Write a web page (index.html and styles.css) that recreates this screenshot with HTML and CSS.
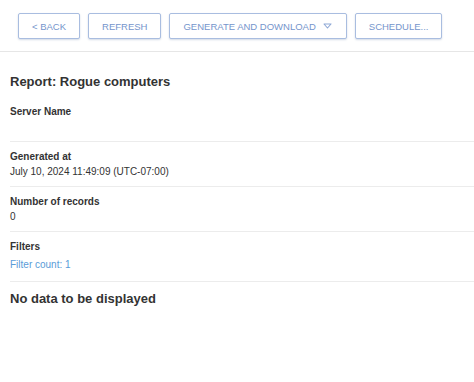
FILE: index.html
```html
<!DOCTYPE html>
<html lang="en">
<head>
    <meta charset="UTF-8">
    <meta name="viewport" content="width=device-width, initial-scale=1.0">
    <title>Report: Rogue computers</title>
    <link rel="stylesheet" href="styles.css">
</head>
<body>
    <div class="toolbar">
        <button class="btn">&lt; Back</button>
        <button class="btn">Refresh</button>
        <button class="btn dropdown">
            Generate and download
            <svg class="caret" width="9" height="6" viewBox="0 0 9 6">
                <path d="M1 1 L4.5 5 L8 1 Z" fill="none" stroke="#8fa9d6" stroke-width="1.1" stroke-linejoin="round"/>
            </svg>
        </button>
        <button class="btn">Schedule...</button>
    </div>

    <div class="report">
        <h1 class="title">Report: Rogue computers</h1>

        <div class="field">
            <div class="label">Server Name</div>
            <div class="value"></div>
        </div>
        <div class="field">
            <div class="label">Generated at</div>
            <div class="value">July 10, 2024 11:49:09 (UTC-07:00)</div>
        </div>
        <div class="field">
            <div class="label">Number of records</div>
            <div class="value">0</div>
        </div>
        <div class="field">
            <div class="label">Filters</div>
            <div class="value link">Filter count: 1</div>
        </div>

        <h2 class="empty">No data to be displayed</h2>
    </div>
</body>
</html>
```

FILE: styles.css
```css
* {
    box-sizing: border-box;
}

body {
    margin: 0;
    background-color: #ffffff;
    font-family: 'Liberation Sans', Arial, Helvetica, sans-serif;
    color: #333333;
}

.toolbar {
    display: flex;
    gap: 8px;
    padding: 13px 18px 12px;
    border-bottom: 1px solid #e6e6e6;
}

.btn {
    display: flex;
    align-items: center;
    height: 26px;
    padding: 0 13px;
    font-family: inherit;
    font-size: 9.5px;
    text-transform: uppercase;
    white-space: nowrap;
    color: #7595cc;
    background-color: #ffffff;
    border: 1px solid #a9bde0;
    border-radius: 2px;
    box-shadow: 0 1px 2px rgba(80, 110, 160, 0.25);
    cursor: pointer;
}

.dropdown {
    padding-right: 14px;
}

.caret {
    margin-left: 7px;
}

.report {
    padding-left: 10px;
}

.title {
    margin: 0;
    padding: 21px 0 6px;
    font-size: 13px;
    font-weight: bold;
    line-height: 18px;
}

.field {
    padding: 7px 0;
    border-bottom: 1px solid #ececec;
}

.label {
    font-size: 10px;
    font-weight: bold;
    line-height: 15px;
}

.value {
    min-height: 15px;
    font-size: 10px;
    line-height: 15px;
}

.link {
    margin-top: 3px;
    padding-bottom: 2px;
    color: #5a9bd8;
}

.empty {
    margin: 0;
    padding: 9px 0;
    font-size: 13px;
    font-weight: bold;
    line-height: 16px;
}
```
